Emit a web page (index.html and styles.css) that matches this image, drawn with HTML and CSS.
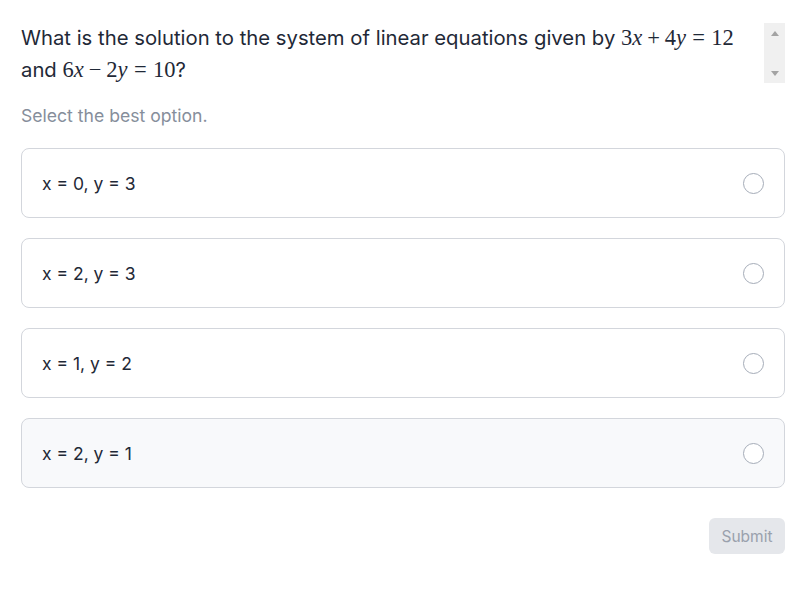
FILE: index.html
```html
<!DOCTYPE html>
<html>
<head>
	<meta charset="utf-8">
	<title>Question</title>
	<link rel="stylesheet" href="styles.css">
</head>
<body>
	<div class="quiz">
		<div class="question">
			<p class="qText">What is the solution to the system of linear equations given by <span class="math">3<i>x</i><span class="bin">+</span>4<i>y</i><span class="rel">=</span>12</span> and <span class="math">6<i>x</i><span class="bin">−</span>2<i>y</i><span class="rel">=</span>10</span>?</p>
			<div class="scrollbar">
				<span class="arrowUp"></span>
				<span class="arrowDown"></span>
			</div>
		</div>
		<div class="hint">Select the best option.</div>
		<div class="options">
			<label class="option">
				<span class="optText">x = 0, y = 3</span>
				<span class="radio"></span>
			</label>
			<label class="option">
				<span class="optText">x = 2, y = 3</span>
				<span class="radio"></span>
			</label>
			<label class="option">
				<span class="optText">x = 1, y = 2</span>
				<span class="radio"></span>
			</label>
			<label class="option hover">
				<span class="optText">x = 2, y = 1</span>
				<span class="radio"></span>
			</label>
		</div>
		<div class="actions">
			<button class="btnSubmit" disabled>Submit</button>
		</div>
	</div>
</body>
</html>
```

FILE: styles.css
```css
html, body {
	margin: 0;
	background: #fff;
	font-family: Inter, "Noto Sans", sans-serif;
	color: #1f2937;
}

.quiz {
	padding: 23px 12px 40px 21px;
}

.question {
	display: flex;
	height: 60px;
	overflow: hidden;
}

.qText {
	flex: 1;
	margin: -1px 0 0 0;
	padding-right: 24px;
	font-size: 20.3px;
	line-height: 32px;
}

.math {
	font-family: "Liberation Serif", "DejaVu Serif", serif;
	font-size: 22.5px;
	white-space: nowrap;
}

.math i {
	font-style: italic;
}

.bin {
	margin: 0 0.22em;
}

.rel {
	margin: 0 0.28em;
}

.scrollbar {
	width: 21px;
	height: 60px;
	background: #f0f0f0;
	display: flex;
	flex-direction: column;
	justify-content: space-between;
	align-items: center;
	padding: 8px 0 7px 0;
	box-sizing: border-box;
}

.arrowUp {
	width: 0;
	height: 0;
	border-left: 4.5px solid transparent;
	border-right: 4.5px solid transparent;
	border-bottom: 5px solid #a3a3a3;
}

.arrowDown {
	width: 0;
	height: 0;
	border-left: 4.5px solid transparent;
	border-right: 4.5px solid transparent;
	border-top: 5px solid #a3a3a3;
}

.hint {
	margin-top: 22px;
	font-size: 17.6px;
	color: #868e9b;
}

.options {
	margin-top: 22px;
	display: flex;
	flex-direction: column;
	gap: 20px;
}

.option {
	display: flex;
	align-items: center;
	justify-content: space-between;
	height: 68px;
	padding: 0 20px 0 20px;
	border: 1px solid #d3d6dc;
	border-radius: 8px;
	background: #fff;
}

.option.hover {
	background: #f8f9fb;
}

.optText {
	font-size: 17.5px;
}

.radio {
	width: 19px;
	height: 19px;
	border: 1px solid #a5acb8;
	border-radius: 50%;
	background: #fff;
}

.actions {
	display: flex;
	justify-content: flex-end;
	margin-top: 30px;
}

.btnSubmit {
	height: 36px;
	padding: 0 12.5px;
	border: none;
	border-radius: 6px;
	background: #e5e7eb;
	color: #9aa1ad;
	font-family: Inter, "Noto Sans", sans-serif;
	font-size: 15.5px;
}
```
